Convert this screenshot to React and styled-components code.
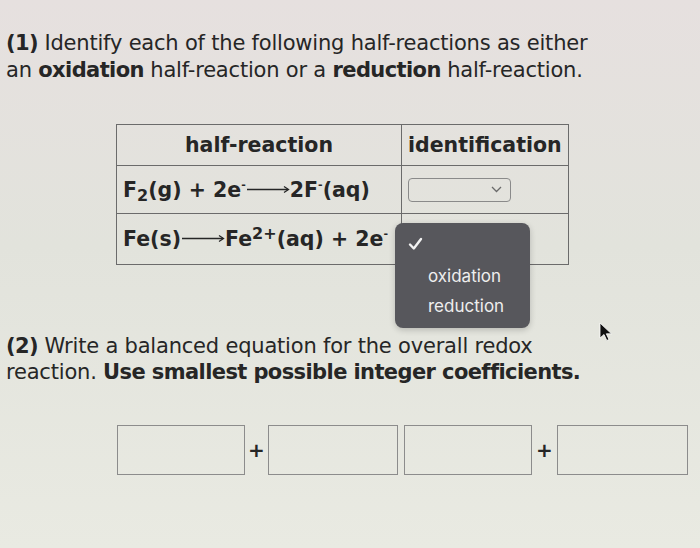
import React from "react"
import styled, { createGlobalStyle } from "styled-components"

const Global = createGlobalStyle`
  html, body {
    margin: 0;
    padding: 0;
  }
  body {
    width: 700px;
    height: 548px;
    overflow: hidden;
    background: linear-gradient(180deg, #e6e0df 0%, #e2e3dc 45%, #e9eae2 100%);
    font-family: "DejaVu Sans", Verdana, sans-serif;
    color: #262626;
  }
`

const Page = styled.div`
  position: relative;
  width: 700px;
  height: 548px;
  padding: 30px 0 0 6px;
  box-sizing: border-box;
`

const Prompt = styled.p`
  margin: 0;
  font-size: 21px;
  line-height: 27px;
  letter-spacing: -0.2px;
  b {
    font-weight: 700;
    letter-spacing: -0.6px;
  }
`

const Table = styled.table`
  margin: 40px 0 0 110px;
  border-collapse: collapse;
  font-size: 20.5px;
  font-weight: 700;
  td,
  th {
    border: 1.5px solid #6b6b6b;
    padding: 0 6px;
    white-space: nowrap;
  }
  th {
    height: 40px;
    text-align: center;
  }
`

const Row = styled.tr`
  td {
    height: ${(p) => p.$h}px;
  }
`

const FirstCol = styled.th`
  width: 272px;
`

const IdCell = styled.td`
  position: relative;
  width: 150px;
`

const Arrow = styled.svg`
  width: 44px;
  height: 10px;
  vertical-align: 3px;
`

const Sup = styled.sup`
  font-size: ${(p) => (p.$small ? 11 : 16)}px;
  line-height: 0;
  vertical-align: ${(p) => (p.$small ? 9 : 7)}px;
  font-weight: 700;
`

const Sub = styled.sub`
  font-size: 16px;
  line-height: 0;
  vertical-align: -4px;
`

const Select = styled.div`
  width: 103px;
  height: 24px;
  box-sizing: border-box;
  border: 1.5px solid #8a8a8a;
  border-radius: 4px;
  display: flex;
  align-items: center;
  justify-content: flex-end;
  padding-right: 8px;
`

const Menu = styled.div`
  position: absolute;
  left: -7px;
  top: 9px;
  width: 135px;
  height: 105px;
  box-sizing: border-box;
  background: #57575c;
  border-radius: 8px;
  box-shadow: 0 2px 6px rgba(0, 0, 0, 0.2);
  padding: 14px 0 0 13px;
  font-family: Inter, "Noto Sans", sans-serif;
  font-weight: 400;
  font-size: 17px;
  color: #eeeeee;
  z-index: 2;
`

const Check = styled.svg`
  display: block;
  width: 15px;
  height: 14px;
`

const Option = styled.div`
  padding-left: 20px;
  height: 30px;
  line-height: 30px;
  margin-top: ${(p) => p.$mt || 0}px;
`

const Prompt2 = styled(Prompt)`
  margin-top: 68px;
  line-height: 26px;
`

const Equation = styled.div`
  display: flex;
  align-items: center;
  margin: 40px 0 0 111px;
`

const Box = styled.div`
  width: ${(p) => p.$w}px;
  height: 50px;
  box-sizing: border-box;
  border: 1.5px solid #8c8c8c;
  margin-left: ${(p) => p.$ml || 0}px;
`

const Plus = styled.span`
  width: ${(p) => p.$w || 23}px;
  text-align: center;
  font-size: 20px;
  font-weight: 700;
`

const Cursor = styled.svg`
  position: absolute;
  left: 599px;
  top: 322px;
  width: 14px;
  height: 20px;
`

function LongArrow() {
  return (
    <Arrow viewBox="0 0 44 10">
      <path d="M1 5.5H42" stroke="#262626" strokeWidth="1.3" />
      <path d="M38 2.5L42.5 5.5L38 8.5" stroke="#262626" strokeWidth="1.3" fill="none" />
    </Arrow>
  )
}

export default function App() {
  return (
    <Page>
      <Global />
      <Prompt>
        <b>(1)</b> Identify each of the following half-reactions as either
        <br />
        an <b>oxidation</b> half-reaction or a <b>reduction</b> half-reaction.
      </Prompt>

      <Table>
        <thead>
          <tr>
            <FirstCol>half-reaction</FirstCol>
            <th>identification</th>
          </tr>
        </thead>
        <tbody>
          <Row $h={47}>
            <td>
              F<Sub>2</Sub>(g) + 2e<Sup $small>-</Sup>
              <LongArrow />
              2F<Sup $small>-</Sup>(aq)
            </td>
            <IdCell>
              <Select>
                <svg width="11" height="7" viewBox="0 0 11 7">
                  <path d="M1 1L5.5 5.5L10 1" stroke="#6a6a6a" strokeWidth="1.3" fill="none" />
                </svg>
              </Select>
            </IdCell>
          </Row>
          <Row $h={50}>
            <td>
              Fe(s)
              <LongArrow />
              Fe<Sup>2+</Sup>(aq) + 2e<Sup $small>-</Sup>
            </td>
            <IdCell>
              <Menu>
                <Check viewBox="0 0 15 14">
                  <path d="M2 7.5L5.8 11.5L13 2" stroke="#f2f2f2" strokeWidth="2.4" fill="none" strokeLinecap="round" strokeLinejoin="round" />
                </Check>
                <Option $mt={10}>oxidation</Option>
                <Option>reduction</Option>
              </Menu>
            </IdCell>
          </Row>
        </tbody>
      </Table>

      <Prompt2>
        <b>(2)</b> Write a balanced equation for the overall redox
        <br />
        reaction. <b>Use smallest possible integer coefficients.</b>
      </Prompt2>

      <Equation>
        <Box $w={128} />
        <Plus>+</Plus>
        <Box $w={130} />
        <Box $w={128} $ml={6} />
        <Plus $w={25}>+</Plus>
        <Box $w={131} />
      </Equation>

      <Cursor viewBox="0 0 14 20">
        <path d="M1 1V16L5 12.5L7.8 18.5L10 17.5L7.3 11.8H12.5Z" fill="#111" stroke="#fff" strokeWidth="0.8" />
      </Cursor>
    </Page>
  )
}
